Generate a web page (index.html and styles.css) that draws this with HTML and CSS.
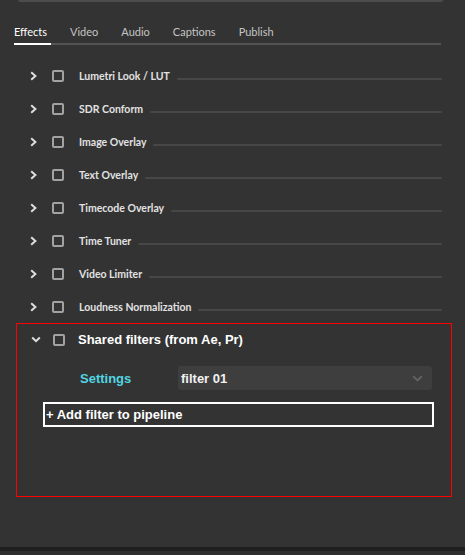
FILE: index.html
```html
<!DOCTYPE html>
<html>
<head>
<meta charset="utf-8">
<link rel="stylesheet" href="styles.css">
</head>
<body>
<div class="page">
  <div class="topline"></div>
  <div class="tabs">
    <div class="tab active">Effects</div>
    <div class="tab">Video</div>
    <div class="tab">Audio</div>
    <div class="tab">Captions</div>
    <div class="tab">Publish</div>
  </div>
  <div class="rows">
    <div class="row"><svg class="chev" width="7" height="10" viewBox="0 0 7 10"><path d="M1.2 1.2 L5.4 5 L1.2 8.8" /></svg><span class="cb"></span><span class="label">Lumetri Look / LUT</span><span class="rule"></span></div>
    <div class="row"><svg class="chev" width="7" height="10" viewBox="0 0 7 10"><path d="M1.2 1.2 L5.4 5 L1.2 8.8" /></svg><span class="cb"></span><span class="label">SDR Conform</span><span class="rule"></span></div>
    <div class="row"><svg class="chev" width="7" height="10" viewBox="0 0 7 10"><path d="M1.2 1.2 L5.4 5 L1.2 8.8" /></svg><span class="cb"></span><span class="label">Image Overlay</span><span class="rule"></span></div>
    <div class="row"><svg class="chev" width="7" height="10" viewBox="0 0 7 10"><path d="M1.2 1.2 L5.4 5 L1.2 8.8" /></svg><span class="cb"></span><span class="label">Text Overlay</span><span class="rule"></span></div>
    <div class="row"><svg class="chev" width="7" height="10" viewBox="0 0 7 10"><path d="M1.2 1.2 L5.4 5 L1.2 8.8" /></svg><span class="cb"></span><span class="label">Timecode Overlay</span><span class="rule"></span></div>
    <div class="row"><svg class="chev" width="7" height="10" viewBox="0 0 7 10"><path d="M1.2 1.2 L5.4 5 L1.2 8.8" /></svg><span class="cb"></span><span class="label">Time Tuner</span><span class="rule"></span></div>
    <div class="row"><svg class="chev" width="7" height="10" viewBox="0 0 7 10"><path d="M1.2 1.2 L5.4 5 L1.2 8.8" /></svg><span class="cb"></span><span class="label">Video Limiter</span><span class="rule"></span></div>
    <div class="row"><svg class="chev" width="7" height="10" viewBox="0 0 7 10"><path d="M1.2 1.2 L5.4 5 L1.2 8.8" /></svg><span class="cb"></span><span class="label">Loudness Normalization</span><span class="rule"></span></div>
  </div>
  <div class="panel">
    <div class="phead">
      <svg class="chevdown" width="10" height="7" viewBox="0 0 10 7"><path d="M1.2 1.5 L5 5.2 L8.8 1.5" /></svg>
      <span class="cb"></span>
      <span class="ptitle">Shared filters (from Ae, Pr)</span>
    </div>
    <div class="settings">
      <span class="slabel">Settings</span>
      <div class="select">
        <span class="sval">filter 01</span>
        <svg class="schev" width="11" height="7" viewBox="0 0 11 7"><path d="M1.2 1.2 L5.5 5.4 L9.8 1.2" /></svg>
      </div>
    </div>
    <div class="addbtn">+ Add filter to pipeline</div>
  </div>
  <div class="bottombar"></div>
  <div class="footer"></div>
</div>
</body>
</html>
```

FILE: styles.css
```css
html, body {
  margin: 0;
  padding: 0;
  background: #333333;
}
.page {
  width: 465px;
  height: 555px;
  overflow: hidden;
  display: flex;
  flex-direction: column;
  background: #333333;
}
.topline {
  flex: none;
  height: 2px;
  margin: 0 22px 0 18px;
  background: #4c4c4c;
  border-radius: 0 0 2px 2px;
}
.tabs {
  flex: none;
  display: flex;
  gap: 19px;
  margin: 23px 24px 0 14px;
  border-bottom: 2px solid #545454;
  font-family: Lato, "Open Sans", sans-serif;
  font-size: 11px;
  line-height: 14px;
}
.tab {
  color: #c4c4c4;
  padding: 0 4px 4px 0;
}
.tab.active {
  color: #ffffff;
  border-bottom: 2px solid #ffffff;
  margin-bottom: -2px;
}
.rows {
  flex: none;
  margin-top: 14px;
  display: flex;
  flex-direction: column;
}
.row {
  height: 33px;
  display: flex;
  align-items: center;
}
.chev {
  margin-left: 30px;
  flex: none;
}
.chev path, .chevdown path {
  fill: none;
  stroke: #dedede;
  stroke-width: 2;
}
.cb {
  flex: none;
  width: 12px;
  height: 12px;
  box-sizing: border-box;
  border: 2px solid #a2a2a2;
  border-radius: 2px;
  margin-left: 15px;
}
.label {
  margin-left: 15px;
  font-family: Lato, sans-serif;
  font-weight: 700;
  font-size: 10.5px;
  color: #e2e2e2;
  white-space: nowrap;
}
.rule {
  flex: 1;
  height: 2px;
  margin: 6px 23px 0 7px;
  background: #474747;
  border-radius: 1px;
}
.panel {
  flex: none;
  margin-left: 16px;
  width: 436px;
  height: 174px;
  box-sizing: border-box;
  border: 1px solid #ff0000;
  display: flex;
  flex-direction: column;
  font-family: "Liberation Sans", Arial, sans-serif;
  font-weight: 700;
  font-size: 13px;
}
.phead {
  height: 31px;
  display: flex;
  align-items: center;
}
.chevdown {
  margin-left: 14px;
  flex: none;
}
.phead .cb {
  margin-left: 12px;
}
.ptitle {
  margin-left: 13px;
  color: #ffffff;
}
.settings {
  margin-top: 11px;
  display: flex;
  align-items: center;
  height: 24px;
}
.slabel {
  margin-left: 63px;
  width: 98px;
  color: #52d5e2;
}
.select {
  width: 254px;
  height: 24px;
  background: #3e3e3e;
  border-radius: 3px;
  display: flex;
  align-items: center;
  justify-content: space-between;
  padding: 0 9px 0 3px;
  box-sizing: border-box;
}
.sval {
  color: #f2f2f2;
}
.schev path {
  fill: none;
  stroke: #626262;
  stroke-width: 2;
}
.addbtn {
  margin: 12px 0 0 26px;
  width: 391px;
  height: 25px;
  box-sizing: border-box;
  border: 2px solid #ffffff;
  color: #ffffff;
  padding-left: 1px;
  display: flex;
  align-items: center;
}
.bottombar {
  margin-top: auto;
  height: 4px;
  background: #1f1f1f;
  flex: none;
}
.footer {
  height: 4px;
  flex: none;
  background: #2e2e2e;
}
```
